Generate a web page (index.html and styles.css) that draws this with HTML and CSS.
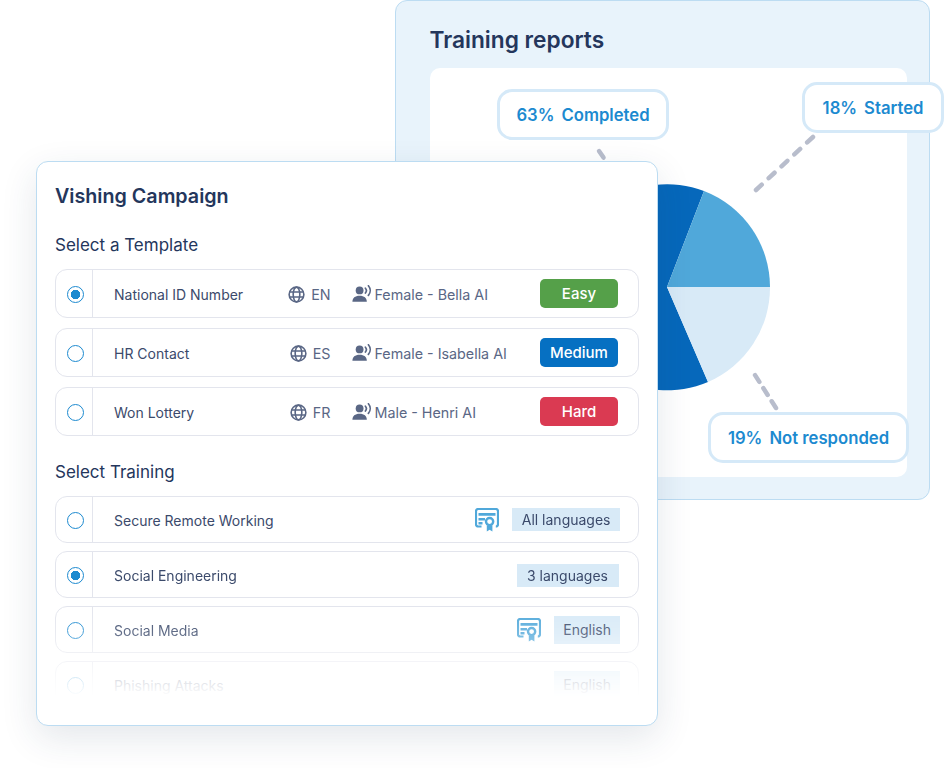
FILE: index.html
```html
<!DOCTYPE html>
<html lang="en">
<head>
    <meta charset="UTF-8">
    <meta name="viewport" content="width=device-width, initial-scale=1.0">
    <title>Vishing Campaign</title>
    <link rel="stylesheet" href="styles.css">
</head>
<body>
    <svg width="0" height="0" class="icon-defs">
        <symbol id="globe" viewBox="0 0 18 18">
            <g fill="none" stroke="currentColor" stroke-width="1.7">
                <circle cx="9" cy="9" r="7.800"/>
                <ellipse cx="9" cy="9" rx="3.500" ry="7.800"/>
                <path d="M1.800 6.400h14.400M1.800 11.600h14.400"/>
            </g>
        </symbol>
        <symbol id="voice" viewBox="0 0 20 18">
            <circle cx="7.600" cy="5.400" r="3.900" fill="currentColor"/>
            <path d="M0.400 16.800c0-3.800 2.600-6 7.200-6s7.200 2.200 7.200 6z" fill="currentColor"/>
            <path d="M13.400 3.200c1.200 1.400 1.200 3.400 0 4.800M16.400 0.800c2.400 2.800 2.400 6.800 0 9.600" fill="none" stroke="currentColor" stroke-width="1.700" stroke-linecap="round"/>
        </symbol>
        <symbol id="cert" viewBox="0 0 24 24">
            <path d="M6.500 18.500H3.200A2.200 2.200 0 0 1 1 16.300V3.200A2.200 2.200 0 0 1 3.200 1h17.600A2.200 2.200 0 0 1 23 3.200v13.100a2.200 2.200 0 0 1-2.200 2.200" fill="none" stroke="currentColor" stroke-width="2.200"/>
            <path d="M3.500 5h17v2.800h-17zM3.500 10h6.500v2.400H3.500zM3.500 14h4v2.400h-4z" fill="currentColor"/>
            <circle cx="14.600" cy="13.600" r="3.600" fill="#fff" stroke="currentColor" stroke-width="2.400"/>
            <path d="M11.800 17.500v6l2.800-1.800 2.800 1.800v-6z" fill="currentColor"/>
        </symbol>
    </svg>

    <div class="stage">
        <section class="report-window">
            <h2 class="report-title">Training reports</h2>
            <div class="report-body"></div>
        </section>

        <svg class="pie" width="944" height="768" viewBox="0 0 944 768">
            <path d="M667 287L708 382A103 103 0 1 1 704 191Z" fill="#0668bb"/>
            <path d="M667 287L704 191A103 103 0 0 1 770 287Z" fill="#50a8da"/>
            <path d="M667 287L770 287A103 103 0 0 1 708 382Z" fill="#d8eaf7"/>
            <g stroke="#b8bdcc" stroke-width="4.500" stroke-linecap="round" fill="none" stroke-dasharray="8 9.500">
                <path d="M599 151L612 170"/>
                <path d="M813 137L756 190"/>
                <path d="M776 408L755 375" stroke-dasharray="8 7.500"/>
            </g>
        </svg>

        <div class="callout callout-completed"><span>63%</span><span>Completed</span></div>
        <div class="callout callout-started"><span>18%</span><span>Started</span></div>
        <div class="callout callout-none"><span>19%</span><span>Not responded</span></div>

        <section class="campaign-window">
            <h1 class="campaign-title">Vishing Campaign</h1>

            <h3 class="section-title">Select a Template</h3>
            <div class="template-list">
                <div class="row template-row">
                    <div class="radio-cell"><span class="radio checked"></span></div>
                    <div class="row-name">National ID Number</div>
                    <div class="lang"><svg class="globe-icon"><use href="#globe"/></svg>EN</div>
                    <div class="voice"><svg class="voice-icon"><use href="#voice"/></svg>Female - Bella AI</div>
                    <div class="level level-easy">Easy</div>
                </div>
                <div class="row template-row">
                    <div class="radio-cell"><span class="radio"></span></div>
                    <div class="row-name">HR Contact</div>
                    <div class="lang"><svg class="globe-icon"><use href="#globe"/></svg>ES</div>
                    <div class="voice"><svg class="voice-icon"><use href="#voice"/></svg>Female - Isabella AI</div>
                    <div class="level level-medium">Medium</div>
                </div>
                <div class="row template-row">
                    <div class="radio-cell"><span class="radio"></span></div>
                    <div class="row-name">Won Lottery</div>
                    <div class="lang"><svg class="globe-icon"><use href="#globe"/></svg>FR</div>
                    <div class="voice"><svg class="voice-icon"><use href="#voice"/></svg>Male - Henri AI</div>
                    <div class="level level-hard">Hard</div>
                </div>
            </div>

            <h3 class="section-title section-training">Select Training</h3>
            <div class="training-list">
                <div class="row training-row">
                    <div class="radio-cell"><span class="radio"></span></div>
                    <div class="row-name">Secure Remote Working</div>
                    <svg class="cert-icon"><use href="#cert"/></svg>
                    <div class="tag">All languages</div>
                </div>
                <div class="row training-row">
                    <div class="radio-cell"><span class="radio checked"></span></div>
                    <div class="row-name">Social Engineering</div>
                    <div class="tag tag-inset">3 languages</div>
                </div>
                <div class="row training-row">
                    <div class="radio-cell"><span class="radio"></span></div>
                    <div class="row-name">Social Media</div>
                    <svg class="cert-icon"><use href="#cert"/></svg>
                    <div class="tag tag-tall">English</div>
                </div>
                <div class="row training-row">
                    <div class="radio-cell"><span class="radio"></span></div>
                    <div class="row-name">Phishing Attacks</div>
                    <div class="tag tag-tall">English</div>
                </div>
            </div>
        </section>
    </div>
</body>
</html>
```

FILE: styles.css
```css
html, body {
    margin: 0;
    padding: 0;
    background: #fff;
}

body {
    font-family: "Inter", "Liberation Sans", sans-serif;
    color: #24365c;
}

h1, h2, h3 {
    margin: 0;
}

.icon-defs {
    position: absolute;
}

.stage {
    position: relative;
    width: 944px;
    height: 768px;
    overflow: hidden;
}

/* back window */
.report-window {
    position: absolute;
    left: 395px;
    top: 0;
    width: 535px;
    height: 500px;
    box-sizing: border-box;
    padding: 25px 22.500px 22px 33.500px;
    display: flex;
    flex-direction: column;
    background: #e8f3fb;
    border: 1.500px solid #bcdcf2;
    border-radius: 12px;
}

.report-title {
    font-size: 22.700px;
    line-height: 28px;
    font-weight: 600;
    margin-bottom: 14px;
}

.report-body {
    flex: 1;
    background: #fff;
    border-radius: 10px;
}

.pie {
    position: absolute;
    left: 0;
    top: 0;
}

.callout {
    position: absolute;
    box-sizing: border-box;
    height: 51px;
    display: flex;
    align-items: center;
    justify-content: center;
    gap: 7px;
    background: #fff;
    border: 3px solid #d5e9f8;
    border-radius: 15px;
    color: #1c8ad0;
    font-size: 16.700px;
    font-weight: 600;
}

.callout-completed {
    left: 497px;
    top: 89px;
    width: 172px;
}

.callout-started {
    left: 802px;
    top: 82px;
    width: 142px;
}

.callout-none {
    left: 708px;
    top: 412px;
    width: 201px;
}

/* front window */
.campaign-window {
    position: absolute;
    left: 36px;
    top: 161px;
    width: 622px;
    height: 565px;
    box-sizing: border-box;
    padding: 20.500px 18.500px 28px 18px;
    display: flex;
    flex-direction: column;
    background: #fff;
    border: 1.500px solid #bcdcf2;
    border-radius: 12px;
    box-shadow: 0 12px 36px rgba(36, 54, 92, 0.12);
}

.campaign-title {
    font-size: 19.700px;
    line-height: 26px;
    font-weight: 600;
    margin-bottom: 25px;
}

.section-title {
    font-size: 17px;
    line-height: 22px;
    font-weight: 400;
    margin-bottom: 13px;
}

.section-training {
    margin-top: 25px;
}

.template-list {
    display: flex;
    flex-direction: column;
    gap: 10px;
}

.training-list {
    flex: 1;
    display: flex;
    flex-direction: column;
    gap: 8px;
    overflow: hidden;
    -webkit-mask-image: linear-gradient(to bottom, #000 55%, rgba(0, 0, 0, 0.8) 68%, rgba(0, 0, 0, 0.2) 90%, transparent 100%);
    mask-image: linear-gradient(to bottom, #000 55%, rgba(0, 0, 0, 0.8) 68%, rgba(0, 0, 0, 0.2) 90%, transparent 100%);
}

.row {
    display: flex;
    align-items: center;
    flex-shrink: 0;
    box-sizing: border-box;
    background: #fff;
    border: 1.500px solid #e3e5ed;
    border-radius: 12px;
    font-size: 14px;
    color: #3b4a6b;
}

.template-row {
    height: 49px;
    padding-right: 19.500px;
}

.training-row {
    height: 47px;
    padding-right: 17.500px;
}

.radio-cell {
    align-self: stretch;
    width: 34px;
    padding-left: 2px;
    flex-shrink: 0;
    display: flex;
    align-items: center;
    justify-content: center;
    border-right: 1.500px solid #e3e5ed;
}

.radio {
    box-sizing: border-box;
    width: 17px;
    height: 17px;
    margin-top: 2px;
    border: 1.800px solid #1c8ad0;
    border-radius: 50%;
    background: #fff;
}

.radio.checked {
    background: radial-gradient(circle, #1c8ad0 0, #1c8ad0 4.500px, #fff 5px);
}

.row-name {
    flex: 1;
    padding: 2px 0 0 21px;
}

.lang {
    display: flex;
    align-items: center;
    gap: 6px;
    margin-right: 21px;
    padding-top: 2px;
    color: #5a6785;
    font-size: 14.300px;
}

.globe-icon {
    width: 17px;
    height: 17px;
    color: #5a6785;
}

.voice {
    display: flex;
    align-items: center;
    gap: 3px;
    width: 188.500px;
    padding-top: 2px;
    color: #5a6785;
    font-size: 14.300px;
}

.voice-icon {
    width: 20px;
    height: 18px;
    color: #5a6785;
}

.level {
    width: 78px;
    height: 29px;
    display: flex;
    align-items: center;
    justify-content: center;
    border-radius: 5px;
    color: #fff;
    font-size: 15px;
    font-weight: 500;
}

.level-easy {
    background: #55a049;
}

.level-medium {
    background: #0670c2;
}

.level-hard {
    background: #da3a52;
}

.cert-icon {
    width: 24px;
    height: 24px;
    margin: 2px 13px 0 0;
    color: #50a8da;
}

.tag {
    display: flex;
    align-items: center;
    height: 23px;
    margin-top: 1px;
    padding: 0 9.500px;
    background: #d8eaf7;
    font-size: 14px;
}

.tag-inset {
    margin-right: 1.500px;
    margin-top: 2px;
    padding: 0 10.500px;
}

.tag-tall {
    height: 28px;
    padding: 0 9px;
}
```
